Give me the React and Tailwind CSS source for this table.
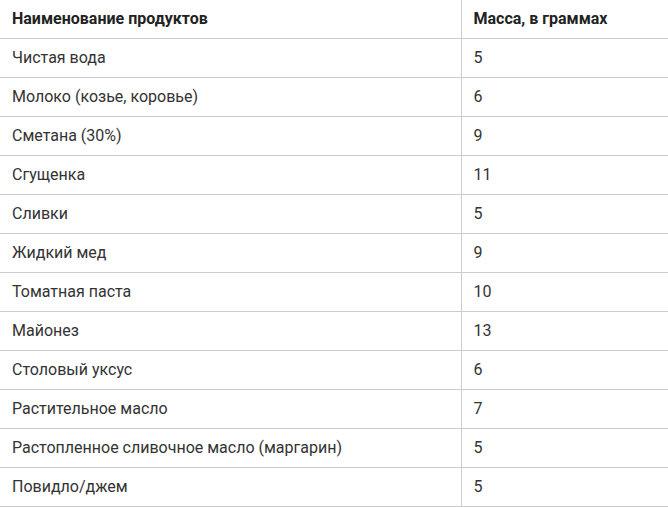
import React from 'react';

const rows = [
    ['Чистая вода', '5'],
    ['Молоко (козье, коровье)', '6'],
    ['Сметана (30%)', '9'],
    ['Сгущенка', '11'],
    ['Сливки', '5'],
    ['Жидкий мед', '9'],
    ['Томатная паста', '10'],
    ['Майонез', '13'],
    ['Столовый уксус', '6'],
    ['Растительное масло', '7'],
    ['Растопленное сливочное масло (маргарин)', '5'],
    ['Повидло/джем', '5'],
];

const App = () => {
    return (
        <div className="w-[668px] bg-white font-['Roboto',sans-serif] text-[#333] text-[16px]">
            <table className="w-full border-collapse">
                <thead>
                    <tr className="border-b border-[#cccccc] h-[38px]">
                        <th className="w-[461px] border-r border-[#cccccc] text-left font-bold pl-3 pr-2 py-0 text-[#222]">Наименование продуктов</th>
                        <th className="text-left font-bold pl-3 py-0 text-[#222]">Масса, в граммах</th>
                    </tr>
                </thead>
                <tbody>
                    {rows.map(([name, mass]) => (
                        <tr key={name} className="border-b border-[#cccccc] h-[39px]">
                            <td className="border-r border-[#cccccc] pl-3 pr-2 py-0">{name}</td>
                            <td className="pl-3 py-0">{mass}</td>
                        </tr>
                    ))}
                </tbody>
            </table>
        </div>
    );
};

export default App;
